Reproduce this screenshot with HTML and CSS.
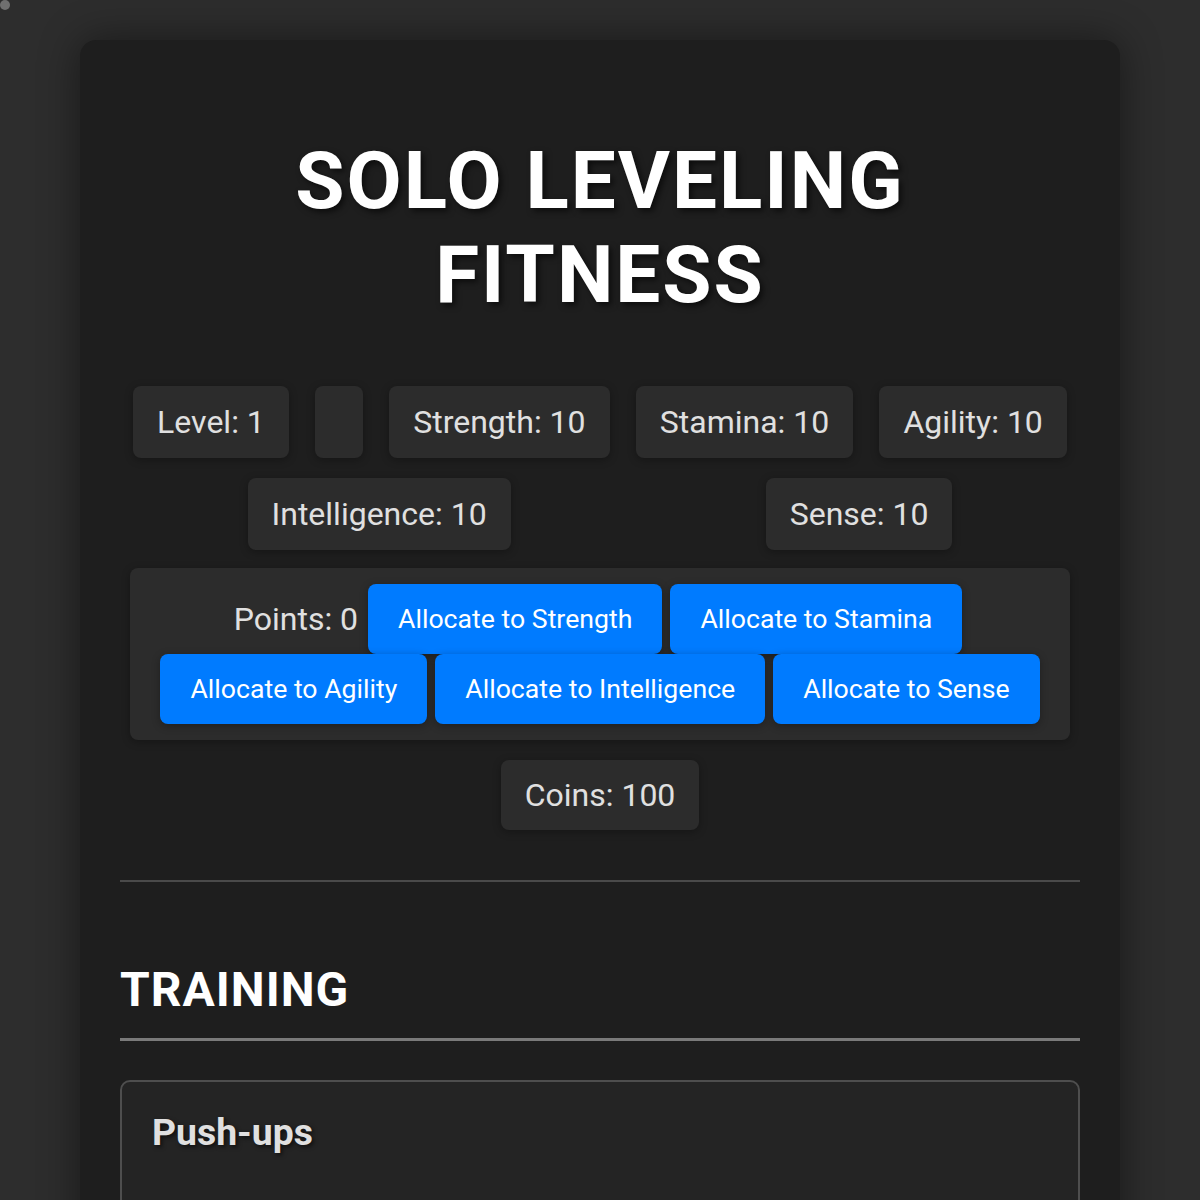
FILE: index.html
```html
<!DOCTYPE html>
<html lang="en">
<head>
<meta charset="utf-8">
<title>Solo Leveling Fitness</title>
<link rel="stylesheet" href="styles.css">
</head>
<body>
<span class="corner-dot"></span>
<main class="app">
  <h1 class="title">SOLO LEVELING FITNESS</h1>
  <div class="stats">
    <div class="stat">Level: 1</div>
    <div class="stat"></div>
    <div class="stat">Strength: 10</div>
    <div class="stat">Stamina: 10</div>
    <div class="stat">Agility: 10</div>
    <div class="stat">Intelligence: 10</div>
    <div class="stat">Sense: 10</div>
  </div>
  <div class="points-panel">
    <span class="points">Points: 0</span>
    <button class="alloc">Allocate to Strength</button>
    <button class="alloc">Allocate to Stamina</button>
    <button class="alloc">Allocate to Agility</button>
    <button class="alloc">Allocate to Intelligence</button>
    <button class="alloc">Allocate to Sense</button>
  </div>
  <div class="coins-row">
    <div class="stat coins">Coins: 100</div>
  </div>
  <div class="divider"></div>
  <h2 class="section-title">TRAINING</h2>
  <section class="card">
    <h3 class="card-title">Push-ups</h3>
  </section>
</main>
</body>
</html>
```

FILE: styles.css
```css
html, body {
  margin: 0;
  padding: 0;
}
body {
  background: #2d2d2d;
  font-family: Roboto, "Noto Sans", "Liberation Sans", sans-serif;
  color: #e0e0e0;
  min-height: 1200px;
  padding-top: 40px;
  box-sizing: border-box;
}
.corner-dot {
  position: absolute;
  left: 0;
  top: 0;
  width: 10px;
  height: 10px;
  border-radius: 50%;
  background: #6f6f6f;
}
.app {
  width: 1040px;
  margin: 0 auto;
  box-sizing: border-box;
  padding: 40px 40px 40px;
  background: #1e1e1e;
  border-radius: 16px;
  box-shadow: 0 0 40px rgba(0, 0, 0, 0.45);
  min-height: 1200px;
}
.title {
  font-size: 80px;
  font-weight: 700;
  letter-spacing: 2px;
  color: #ffffff;
  text-align: center;
  margin: 54px 0;
  padding: 0 20px;
  line-height: normal;
  text-shadow: 3px 3px 6px rgba(0, 0, 0, 0.6);
}
.stats {
  display: flex;
  flex-wrap: wrap;
  justify-content: space-around;
}
.stat {
  box-sizing: border-box;
  height: 72px;
  min-width: 48px;
  margin: 10px;
  padding: 0 24px;
  display: flex;
  align-items: center;
  background: #2c2c2c;
  border-radius: 8px;
  font-size: 32px;
  color: #e0e0e0;
  box-shadow: 0 2px 8px rgba(0, 0, 0, 0.3);
}
.points-panel {
  margin: 8px 10px 10px;
  padding: 16px 0;
  background: #2c2c2c;
  border-radius: 8px;
  display: flex;
  flex-wrap: wrap;
  justify-content: center;
  align-items: center;
  box-shadow: 0 2px 8px rgba(0, 0, 0, 0.3);
}
.points {
  font-size: 32px;
  color: #e0e0e0;
  margin-right: 6px;
}
.alloc {
  height: 70px;
  margin: 0 4px;
  padding: 0 30px;
  border: none;
  border-radius: 8px;
  background: #007bff;
  color: #ffffff;
  font-family: Roboto, "Noto Sans", "Liberation Sans", sans-serif;
  font-size: 26.67px;
  box-shadow: 0 2px 8px rgba(0, 0, 0, 0.3);
  cursor: pointer;
}
.coins-row {
  display: flex;
  justify-content: center;
}
.coins {
  height: 70px;
}
.divider {
  height: 2px;
  background: #4a4a4a;
  margin: 40px 0 0;
}
.section-title {
  font-size: 48px;
  font-weight: 700;
  letter-spacing: 1px;
  color: #ffffff;
  margin: 79px 0 39px;
  padding-bottom: 20px;
  border-bottom: 3px solid #7a7a7a;
  line-height: normal;
}
.card {
  border: 2px solid #4e4e4e;
  border-radius: 10px;
  background: #242424;
  padding: 28px 30px;
  min-height: 200px;
}
.card-title {
  margin: 0;
  font-size: 37.33px;
  font-weight: 700;
  color: #e0e0e0;
  line-height: normal;
  text-shadow: 2px 2px 4px rgba(0, 0, 0, 0.6);
}
```
